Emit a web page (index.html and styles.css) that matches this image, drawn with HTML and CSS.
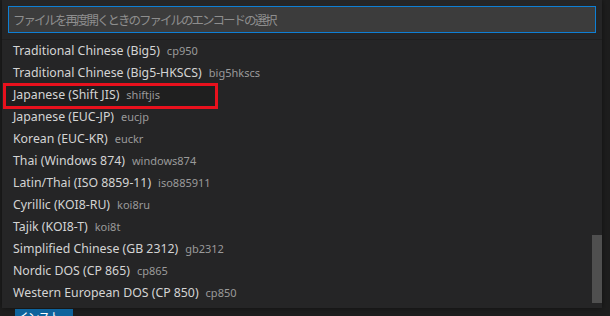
FILE: index.html
```html
<!DOCTYPE html>
<html lang="ja">
<head>
  <meta charset="UTF-8" />
  <title>エンコードの選択</title>
  <link rel="stylesheet" href="styles.css">
</head>
<body>
  <div class="quick-pick">
    <div class="header">
      <div class="input-box">
        <span class="placeholder">ファイルを再度開くときのファイルのエンコードの選択</span>
      </div>
    </div>

    <div class="list">
      <div class="row"><span class="label">Traditional Chinese (Big5)</span><span class="desc">cp950</span></div>
      <div class="row"><span class="label">Traditional Chinese (Big5-HKSCS)</span><span class="desc">big5hkscs</span></div>
      <div class="row"><span class="label">Japanese (Shift JIS)</span><span class="desc">shiftjis</span></div>
      <div class="row"><span class="label">Japanese (EUC-JP)</span><span class="desc">eucjp</span></div>
      <div class="row"><span class="label">Korean (EUC-KR)</span><span class="desc">euckr</span></div>
      <div class="row"><span class="label">Thai (Windows 874)</span><span class="desc">windows874</span></div>
      <div class="row"><span class="label">Latin/Thai (ISO 8859-11)</span><span class="desc">iso885911</span></div>
      <div class="row"><span class="label">Cyrillic (KOI8-RU)</span><span class="desc">koi8ru</span></div>
      <div class="row"><span class="label">Tajik (KOI8-T)</span><span class="desc">koi8t</span></div>
      <div class="row"><span class="label">Simplified Chinese (GB 2312)</span><span class="desc">gb2312</span></div>
      <div class="row"><span class="label">Nordic DOS (CP 865)</span><span class="desc">cp865</span></div>
      <div class="row"><span class="label">Western European DOS (CP 850)</span><span class="desc">cp850</span></div>

      <!-- 注釈の赤枠とスクロールバー -->
      <div class="highlight"></div>
      <div class="scroll-thumb"></div>
    </div>
  </div>

  <div class="below">
    <button class="install-btn">インストール</button>
  </div>
</body>
</html>
```

FILE: styles.css
```css
body {
  margin: 0;
  padding: 0;
  background-color: #1e1e1e;
  font-family: 'Noto Sans', 'Noto Sans CJK JP', sans-serif;
  color: #cccccc;
  width: 610px;
  height: 316px;
  overflow: hidden;
}

.quick-pick {
  width: 600px;
  margin-left: 2px;
  background-color: #252526;
  box-shadow: 0 0 6px rgba(0, 0, 0, 0.5);
}

.header {
  padding: 6px;
  border-bottom: 1px solid #1f1f1f;
}

.input-box {
  height: 27px;
  box-sizing: border-box;
  border: 1px solid #0e7fd4;
  background-color: #3c3c3c;
  display: flex;
  align-items: center;
  padding-left: 4px;
}

.placeholder {
  font-family: 'Noto Sans CJK JP', sans-serif;
  font-size: 12.5px;
  letter-spacing: -2px;
  color: #8e8e8e;
}

.list {
  position: relative;
  padding-bottom: 4px;
}

.row {
  position: relative;
  z-index: 1;
  height: 22px;
  line-height: 22px;
  padding-left: 11px;
  display: flex;
  align-items: baseline;
  gap: 7px;
  white-space: nowrap;
}

.label {
  font-size: 12.3px;
  color: #d4d4d4;
}

.desc {
  font-size: 11px;
  color: #9a9a9a;
}

.highlight {
  position: absolute;
  z-index: 0;
  left: 1px;
  top: 43px;
  width: 209px;
  height: 20px;
  border: 3px solid #e8111d;
  background-color: #1f1f1f;
}

.scroll-thumb {
  position: absolute;
  right: 0;
  top: 195px;
  width: 10px;
  height: 68px;
  background-color: #4f4f4f;
}

.below {
  padding: 1px 0 0 15px;
}

.install-btn {
  width: 58px;
  height: 20px;
  border: none;
  padding: 0;
  background-color: #0e639c;
  color: white;
  font-family: 'Noto Sans CJK JP', sans-serif;
  font-size: 12px;
  line-height: 16px;
  letter-spacing: -1px;
  text-align: center;
  vertical-align: top;
}
```
